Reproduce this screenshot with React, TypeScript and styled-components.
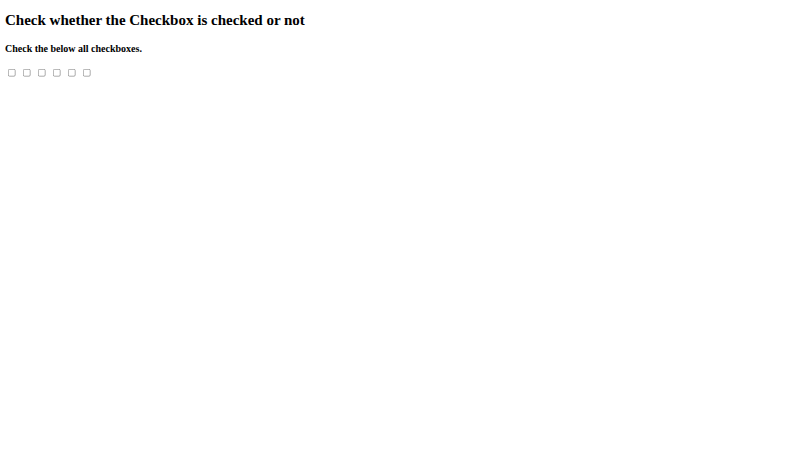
import React from "react";
import styled, { createGlobalStyle } from "styled-components";

const GlobalStyle = createGlobalStyle`
  html {
    zoom: 0.625;
    overflow: hidden;
  }
  body {
    margin: 0 8px 8px;
    font-family: "Liberation Serif", "Times New Roman", serif;
    background: #ffffff;
    color: #000000;
  }
`;

const Title = styled.h2`
  font-size: 1.5em;
  font-weight: bold;
  margin: 0.83em 0;
`;

const Subtitle = styled.h4`
  font-size: 1em;
  font-weight: bold;
  margin: 1.33em 0;
`;

const Boxes = styled.div`
  font-size: 16px;
`;

const Box = styled.input.attrs({ type: "checkbox" })`
  margin: 3px 3px 3px 4px;
`;

const App = () => {
  const boxes = [1, 2, 3, 4, 5, 6];
  return (
    <>
      <GlobalStyle />
      <Title>Check whether the Checkbox is checked or not</Title>
      <Subtitle>Check the below all checkboxes.</Subtitle>
      <Boxes>
        {boxes.map((n) => (
          <React.Fragment key={n}>
            <Box name={`box${n}`} />{" "}
          </React.Fragment>
        ))}
      </Boxes>
    </>
  );
};

export default App;
